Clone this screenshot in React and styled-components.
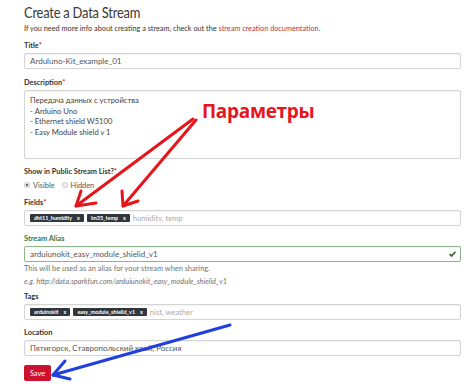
import styled, { createGlobalStyle } from "styled-components";

const GlobalStyle = createGlobalStyle`
  html, body {
    margin: 0;
    padding: 0;
    background: #fff;
  }
  body {
    font-family: Lato, "Open Sans", "Liberation Sans", sans-serif;
    color: #333;
  }
`;

const Page = styled.div`
  position: relative;
  width: 474px;
  height: 386px;
  overflow: hidden;
  box-sizing: border-box;
  padding: 2px 13px 0 24px;
`;

const Heading = styled.h1`
  margin: 0;
  font-size: 16px;
  line-height: 20px;
  font-weight: 400;
  color: #3a3a3a;
  letter-spacing: -0.3px;
  transform: scaleX(0.81);
  transform-origin: left center;
  white-space: nowrap;
`;

const Intro = styled.p`
  margin: 2px 0 7px;
  font-size: 7.3px;
  line-height: 10px;
  color: #333;
`;

const DocLink = styled.span`
  color: #b8324b;
`;

const Group = styled.div`
  margin-bottom: ${(p) => p.$gap ?? 8}px;
`;

const Label = styled.div`
  font-size: 7.4px;
  line-height: 10px;
  font-weight: 700;
  color: ${(p) => (p.$success ? "#3c763d" : "#333")};
  margin-bottom: 2px;
`;

const Req = styled.span`
  color: #c9203a;
`;

const Field = styled.div`
  position: relative;
  box-sizing: border-box;
  height: ${(p) => p.$h || 16}px;
  border: 1px solid ${(p) => (p.$success ? "#8db48a" : "#d4d4d4")};
  border-radius: 2px;
  background: #fff;
  display: flex;
  align-items: ${(p) => (p.$top ? "flex-start" : "center")};
  gap: 3px;
  padding: ${(p) => (p.$top ? "4px 5px" : "0 5px")};
  font-size: 8px;
  color: #555;
  box-shadow: inset 0 1px 1px rgba(0, 0, 0, 0.05);
`;

const Lines = styled.div`
  font-size: 7.6px;
  line-height: 10.6px;
  color: #444;
`;

const Placeholder = styled.span`
  color: #aaa;
  font-size: 7.6px;
`;

const Tag = styled.span`
  display: inline-flex;
  align-items: center;
  gap: 5px;
  height: 8px;
  padding: 0 4px;
  background: #2f373d;
  color: #fff;
  font-size: 5.4px;
  font-weight: 700;
  border-radius: 1px;
`;

const Check = styled.svg`
  position: absolute;
  right: 4px;
  top: 4px;
`;

const RadioRow = styled.div`
  display: flex;
  align-items: center;
  gap: 3px;
  height: 10px;
  margin-top: 3px;
  font-size: 7.4px;
  color: #555;
`;

const Radio = styled.span`
  box-sizing: border-box;
  width: 6px;
  height: 6px;
  border-radius: 50%;
  border: 1px solid #c8c8c8;
  background: ${(p) => (p.$on ? "radial-gradient(circle, #666 0 1.3px, #eee 1.6px)" : "#f3f3f3")};
  margin-left: ${(p) => (p.$first ? 0 : 4)}px;
`;

const Help = styled.div`
  font-size: 7.4px;
  line-height: 12.5px;
  color: #737373;
  padding-top: 1px;
`;

const Example = styled.div`
  font-style: italic;
`;

const SaveButton = styled.button`
  display: block;
  width: 27px;
  height: 16px;
  padding: 0;
  border: none;
  border-radius: 2px;
  background: #cf1130;
  color: #fff;
  font-family: inherit;
  font-size: 7.4px;
  margin-top: 9px;
`;

const Overlay = styled.svg`
  position: absolute;
  left: 0;
  top: 0;
  pointer-events: none;
`;

const Callout = styled.div`
  position: absolute;
  left: 202px;
  top: 98px;
  font-family: "Open Sans", Lato, sans-serif;
  font-size: 19px;
  line-height: 26px;
  font-weight: 700;
  color: #e8141c;
  letter-spacing: -0.3px;
`;

export default function App() {
  return (
    <Page>
      <GlobalStyle />
      <Heading>Create a Data Stream</Heading>
      <Intro>
        If you need more info about creating a stream, check out the{" "}
        <DocLink>stream creation documentation</DocLink>.
      </Intro>

      <Group $gap={9}>
        <Label>
          Title<Req>*</Req>
        </Label>
        <Field>Arduluno-Kit_example_01</Field>
      </Group>

      <Group>
        <Label>
          Description<Req>*</Req>
        </Label>
        <Field $h={69} $top>
          <Lines>
            Передача данных с устройства
            <br />- Arduino Uno
            <br />- Ethernet shield W5100
            <br />- Easy Module shield v 1
          </Lines>
        </Field>
      </Group>

      <Group>
        <Label>
          Show in Public Stream List?<Req>*</Req>
        </Label>
        <RadioRow>
          <Radio $on $first />
          Visible
          <Radio />
          Hidden
        </RadioRow>
      </Group>

      <Group>
        <Label>
          Fields<Req>*</Req>
        </Label>
        <Field>
          <Tag>
            dht11_humidity<span>x</span>
          </Tag>
          <Tag>
            lm35_temp<span>x</span>
          </Tag>
          <Placeholder>humidity, temp</Placeholder>
        </Field>
      </Group>

      <Group $gap={4}>
        <Label $success>Stream Alias</Label>
        <Field $success>
          arduiunokit_easy_module_shielid_v1
          <Check width="7" height="6" viewBox="0 0 7 6">
            <path d="M0.6 3.2 L2.6 5 L6.4 0.8" fill="none" stroke="#2e5e2a" strokeWidth="1.6" />
          </Check>
        </Field>
        <Help>
          This will be used as an alias for your stream when sharing.
          <Example>e.g. http://data.sparkfun.com/arduiunokit_easy_module_shielid_v1</Example>
        </Help>
      </Group>

      <Group>
        <Label>Tags</Label>
        <Field>
          <Tag>
            arduinokit<span>x</span>
          </Tag>
          <Tag>
            easy_module_shielid_v1<span>x</span>
          </Tag>
          <Placeholder>nist, weather</Placeholder>
        </Field>
      </Group>

      <Group $gap={0}>
        <Label>Location</Label>
        <Field>Пятигорск, Ставропольский край, Россия</Field>
      </Group>

      <SaveButton>Save</SaveButton>

      <Callout>Параметры</Callout>
      <Overlay width="474" height="386" viewBox="0 0 474 386">
        <g stroke="#e8141c" strokeWidth="3" strokeLinecap="round" strokeLinejoin="round" fill="none">
          <path d="M193 119 L76 206" />
          <path d="M81 191 L76 206 L96 203" />
          <path d="M196 120 L123 206" />
          <path d="M122 191 L123 206 L138 201" />
        </g>
        <g stroke="#1f3fe0" strokeWidth="3" strokeLinecap="round" strokeLinejoin="round" fill="none">
          <path d="M230 325 L53 375" />
          <path d="M65 361 L53 375 L70 379" />
        </g>
      </Overlay>
    </Page>
  );
}
